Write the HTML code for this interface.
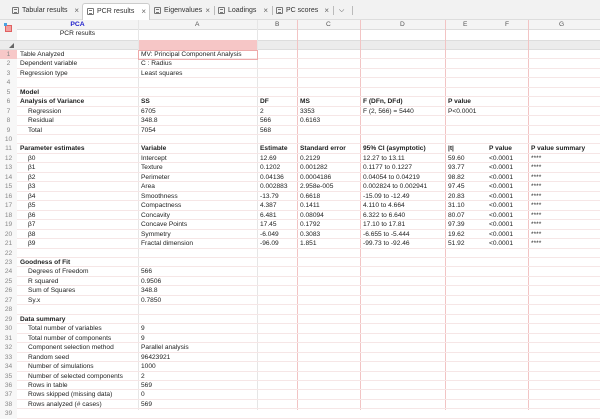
<!DOCTYPE html>
<html><head><meta charset="utf-8"><style>
*{margin:0;padding:0;box-sizing:border-box}
body{width:600px;height:410px;overflow:hidden;background:#fff;font-family:"Liberation Sans",sans-serif;font-size:6.6px;color:#222;position:relative}
.tabs{position:absolute;left:0;top:0;width:600px;height:20px;background:#f2f2f2;border-bottom:1px solid #ddd}
.tab{position:absolute;top:3px;height:17px;font-size:7px;line-height:15px;color:#333;padding-left:14px}
.tab i{position:absolute;left:4px;top:4px;width:7px;height:7px;border:1px solid #777;border-radius:1px}
.tab i:after{content:"";position:absolute;left:1px;top:1px;width:3px;height:2px;border-top:1px solid #777;border-bottom:1px solid #777}
.tab b{font-weight:normal;position:absolute;right:3px;top:0;color:#666;font-size:8px}
.act{background:#fff;border:1px solid #ccc;border-bottom:none;border-radius:3px 3px 0 0}
.sep{position:absolute;top:6px;width:1px;height:9px;background:#bbb}
.hdr{position:absolute;top:20px;left:0;width:600px;height:10px;background:#f4f4f4;border-bottom:1px solid #ddd}
.hdr span{position:absolute;top:1px;color:#555;font-size:6.6px}
.vl{position:absolute;top:20px;bottom:0;width:1px}
.row{position:absolute;left:0;width:600px;height:9.46px;border-bottom:1px solid #f6e6e6;line-height:9px;white-space:nowrap}
.row span{position:absolute;top:0}
.row .n{left:0;width:17px;height:9.46px;text-align:center;color:#888;background:#f7f7f7;font-weight:normal}
.b span{font-weight:bold}
#w{position:absolute;left:0;top:1.6px;width:600px;height:410px}
</style></head><body>
<div class="tabs">
<div class="tab" style="left:8px;width:74px"><i></i>Tabular results<b>×</b></div>
<div class="tab act" style="left:82px;width:68px"><i></i>PCR results<b>×</b></div>
<div class="tab" style="left:150px;width:63px"><i></i>Eigenvalues<b>×</b></div>
<div class="sep" style="left:214px"></div>
<div class="tab" style="left:214px;width:57px"><i></i>Loadings<b>×</b></div>
<div class="sep" style="left:272px"></div>
<div class="tab" style="left:272px;width:60px"><i></i>PC scores<b>×</b></div>
<div class="sep" style="left:333px"></div>
<div class="tab" style="left:334px;width:18px;padding-left:5px">⌵</div>
<div class="sep" style="left:352px"></div>
</div>
<div class="hdr"><span style="left:195px">A</span><span style="left:275px">B</span><span style="left:326px">C</span><span style="left:400px">D</span><span style="left:463px">E</span><span style="left:505px">F</span><span style="left:559px">G</span></div>
<div style="position:absolute;left:0;top:20px;width:17px;height:20px;background:#f4f4f4"></div>
<div style="position:absolute;left:5px;top:25px;width:7px;height:7px;background:#f3a0a0;border:1px solid #e06060"></div>
<div style="position:absolute;left:4px;top:23px;width:3px;height:3px;background:#4aa3e0"></div>
<div style="position:absolute;left:17px;top:21px;width:121px;text-align:center;color:#2222cc;font-weight:bold;font-size:6.8px">PCA</div>
<div style="position:absolute;left:17px;top:30px;width:121px;text-align:center;font-size:6.6px">PCR results</div>
<div style="position:absolute;left:0;top:40px;width:600px;height:9.5px;background:#ececec;border-top:1px solid #ddd;border-bottom:1px solid #ddd"></div>
<div style="position:absolute;left:138px;top:40px;width:119px;height:9.5px;background:#f6c6c6"></div>
<div style="position:absolute;left:9px;top:43px;width:0;height:0;border-left:5px solid transparent;border-bottom:5px solid #666"></div>
<div class="vl" style="left:138px;background:#e6e6e6"></div>
<div class="vl" style="left:257px;background:#e6e6e6"></div>
<div class="vl" style="left:297px;background:#f2c4c4"></div>
<div class="vl" style="left:360px;background:#f2c4c4"></div>
<div class="vl" style="left:445px;background:#f2c4c4"></div>
<div class="vl" style="left:528px;background:#f2c4c4"></div>
<div id="w">
<div style="position:absolute;left:138px;top:48.3px;width:120px;height:9.8px;border:1px solid #eaa;z-index:2"></div>
<div class="row" style="top:48.3px"><span class="n" style="background:#f7c8c8">1</span><span style="left:20px">Table Analyzed</span><span style="left:141px">MV: Principal Component Analysis</span></div>
<div class="row" style="top:57.76px"><span class="n">2</span><span style="left:20px">Dependent variable</span><span style="left:141px">C : Radius</span></div>
<div class="row" style="top:67.22px"><span class="n">3</span><span style="left:20px">Regression type</span><span style="left:141px">Least squares</span></div>
<div class="row" style="top:76.68px"><span class="n">4</span></div>
<div class="row b" style="top:86.14px"><span class="n">5</span><span style="left:20px">Model</span></div>
<div class="row b" style="top:95.6px"><span class="n">6</span><span style="left:20px">Analysis of Variance</span><span style="left:141px">SS</span><span style="left:260px">DF</span><span style="left:300px">MS</span><span style="left:363px">F (DFn, DFd)</span><span style="left:448px">P value</span></div>
<div class="row" style="top:105.06px"><span class="n">7</span><span style="left:28px">Regression</span><span style="left:141px">6705</span><span style="left:260px">2</span><span style="left:300px">3353</span><span style="left:363px">F (2, 566) = 5440</span><span style="left:448px">P&lt;0.0001</span></div>
<div class="row" style="top:114.52px"><span class="n">8</span><span style="left:28px">Residual</span><span style="left:141px">348.8</span><span style="left:260px">566</span><span style="left:300px">0.6163</span></div>
<div class="row" style="top:123.98px"><span class="n">9</span><span style="left:28px">Total</span><span style="left:141px">7054</span><span style="left:260px">568</span></div>
<div class="row" style="top:133.44px"><span class="n">10</span></div>
<div class="row b" style="top:142.9px"><span class="n">11</span><span style="left:20px">Parameter estimates</span><span style="left:141px">Variable</span><span style="left:260px">Estimate</span><span style="left:300px">Standard error</span><span style="left:363px">95% CI (asymptotic)</span><span style="left:448px">|t|</span><span style="left:489px">P value</span><span style="left:531px">P value summary</span></div>
<div class="row" style="top:152.36px"><span class="n">12</span><span style="left:28px">β0</span><span style="left:141px">Intercept</span><span style="left:260px">12.69</span><span style="left:300px">0.2129</span><span style="left:363px">12.27 to 13.11</span><span style="left:448px">59.60</span><span style="left:489px">&lt;0.0001</span><span style="left:531px">****</span></div>
<div class="row" style="top:161.82px"><span class="n">13</span><span style="left:28px">β1</span><span style="left:141px">Texture</span><span style="left:260px">0.1202</span><span style="left:300px">0.001282</span><span style="left:363px">0.1177 to 0.1227</span><span style="left:448px">93.77</span><span style="left:489px">&lt;0.0001</span><span style="left:531px">****</span></div>
<div class="row" style="top:171.28px"><span class="n">14</span><span style="left:28px">β2</span><span style="left:141px">Perimeter</span><span style="left:260px">0.04136</span><span style="left:300px">0.0004186</span><span style="left:363px">0.04054 to 0.04219</span><span style="left:448px">98.82</span><span style="left:489px">&lt;0.0001</span><span style="left:531px">****</span></div>
<div class="row" style="top:180.74px"><span class="n">15</span><span style="left:28px">β3</span><span style="left:141px">Area</span><span style="left:260px">0.002883</span><span style="left:300px">2.958e-005</span><span style="left:363px">0.002824 to 0.002941</span><span style="left:448px">97.45</span><span style="left:489px">&lt;0.0001</span><span style="left:531px">****</span></div>
<div class="row" style="top:190.2px"><span class="n">16</span><span style="left:28px">β4</span><span style="left:141px">Smoothness</span><span style="left:260px">-13.79</span><span style="left:300px">0.6618</span><span style="left:363px">-15.09 to -12.49</span><span style="left:448px">20.83</span><span style="left:489px">&lt;0.0001</span><span style="left:531px">****</span></div>
<div class="row" style="top:199.66px"><span class="n">17</span><span style="left:28px">β5</span><span style="left:141px">Compactness</span><span style="left:260px">4.387</span><span style="left:300px">0.1411</span><span style="left:363px">4.110 to 4.664</span><span style="left:448px">31.10</span><span style="left:489px">&lt;0.0001</span><span style="left:531px">****</span></div>
<div class="row" style="top:209.12px"><span class="n">18</span><span style="left:28px">β6</span><span style="left:141px">Concavity</span><span style="left:260px">6.481</span><span style="left:300px">0.08094</span><span style="left:363px">6.322 to 6.640</span><span style="left:448px">80.07</span><span style="left:489px">&lt;0.0001</span><span style="left:531px">****</span></div>
<div class="row" style="top:218.58px"><span class="n">19</span><span style="left:28px">β7</span><span style="left:141px">Concave Points</span><span style="left:260px">17.45</span><span style="left:300px">0.1792</span><span style="left:363px">17.10 to 17.81</span><span style="left:448px">97.39</span><span style="left:489px">&lt;0.0001</span><span style="left:531px">****</span></div>
<div class="row" style="top:228.04px"><span class="n">20</span><span style="left:28px">β8</span><span style="left:141px">Symmetry</span><span style="left:260px">-6.049</span><span style="left:300px">0.3083</span><span style="left:363px">-6.655 to -5.444</span><span style="left:448px">19.62</span><span style="left:489px">&lt;0.0001</span><span style="left:531px">****</span></div>
<div class="row" style="top:237.5px"><span class="n">21</span><span style="left:28px">β9</span><span style="left:141px">Fractal dimension</span><span style="left:260px">-96.09</span><span style="left:300px">1.851</span><span style="left:363px">-99.73 to -92.46</span><span style="left:448px">51.92</span><span style="left:489px">&lt;0.0001</span><span style="left:531px">****</span></div>
<div class="row" style="top:246.96px"><span class="n">22</span></div>
<div class="row b" style="top:256.42px"><span class="n">23</span><span style="left:20px">Goodness of Fit</span></div>
<div class="row" style="top:265.88px"><span class="n">24</span><span style="left:28px">Degrees of Freedom</span><span style="left:141px">566</span></div>
<div class="row" style="top:275.34px"><span class="n">25</span><span style="left:28px">R squared</span><span style="left:141px">0.9506</span></div>
<div class="row" style="top:284.8px"><span class="n">26</span><span style="left:28px">Sum of Squares</span><span style="left:141px">348.8</span></div>
<div class="row" style="top:294.26px"><span class="n">27</span><span style="left:28px">Sy.x</span><span style="left:141px">0.7850</span></div>
<div class="row" style="top:303.72px"><span class="n">28</span></div>
<div class="row b" style="top:313.18px"><span class="n">29</span><span style="left:20px">Data summary</span></div>
<div class="row" style="top:322.64px"><span class="n">30</span><span style="left:28px">Total number of variables</span><span style="left:141px">9</span></div>
<div class="row" style="top:332.1px"><span class="n">31</span><span style="left:28px">Total number of components</span><span style="left:141px">9</span></div>
<div class="row" style="top:341.56px"><span class="n">32</span><span style="left:28px">Component selection method</span><span style="left:141px">Parallel analysis</span></div>
<div class="row" style="top:351.02px"><span class="n">33</span><span style="left:28px">Random seed</span><span style="left:141px">96423921</span></div>
<div class="row" style="top:360.48px"><span class="n">34</span><span style="left:28px">Number of simulations</span><span style="left:141px">1000</span></div>
<div class="row" style="top:369.94px"><span class="n">35</span><span style="left:28px">Number of selected components</span><span style="left:141px">2</span></div>
<div class="row" style="top:379.4px"><span class="n">36</span><span style="left:28px">Rows in table</span><span style="left:141px">569</span></div>
<div class="row" style="top:388.86px"><span class="n">37</span><span style="left:28px">Rows skipped (missing data)</span><span style="left:141px">0</span></div>
<div class="row" style="top:398.32px"><span class="n">38</span><span style="left:28px">Rows analyzed (# cases)</span><span style="left:141px">569</span></div>
<div class="row" style="top:407.78px"><span class="n">39</span></div>
</div>
</body></html>
